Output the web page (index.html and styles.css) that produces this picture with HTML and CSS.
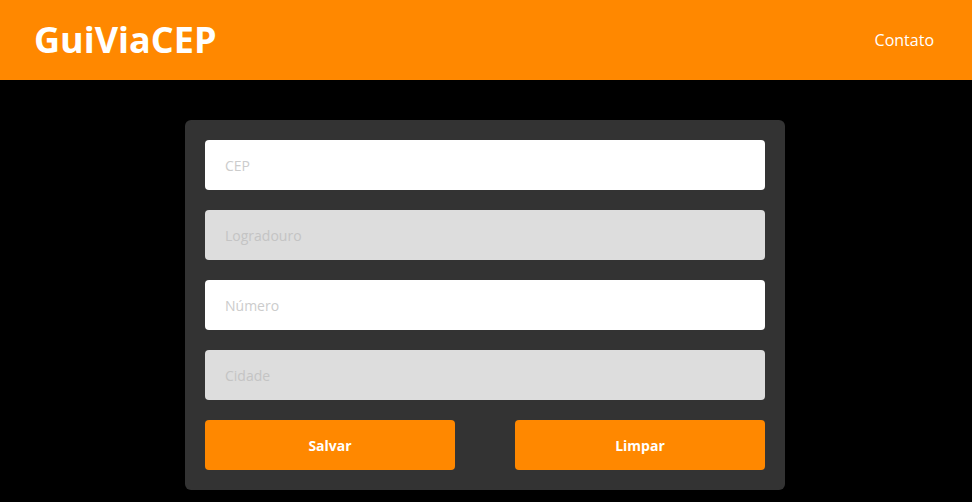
FILE: index.html
```html
<!DOCTYPE html>
<html lang="pt-BR">
<head>
<meta charset="utf-8">
<title>GuiViaCEP</title>
<link rel="stylesheet" href="styles.css">
</head>
<body>
<header class="topbar">
  <h1 class="brand">GuiViaCEP</h1>
  <a class="nav-link" href="#">Contato</a>
</header>
<main class="page">
  <form class="card">
    <input class="field" type="text" placeholder="CEP">
    <input class="field field-disabled" type="text" placeholder="Logradouro" disabled>
    <input class="field" type="text" placeholder="Número">
    <input class="field field-disabled" type="text" placeholder="Cidade" disabled>
    <div class="actions">
      <button class="btn" type="button">Salvar</button>
      <button class="btn" type="button">Limpar</button>
    </div>
  </form>
</main>
</body>
</html>
```
FILE: styles.css
```css
* { box-sizing: border-box; }
html, body {
  margin: 0;
  padding: 0;
  background: #000;
  font-family: "Open Sans", "Liberation Sans", sans-serif;
}
.topbar {
  height: 80px;
  background: #ff8800;
  display: flex;
  align-items: center;
  justify-content: space-between;
  padding: 0 38px 0 34px;
}
.brand {
  margin: 0;
  color: #fff;
  font-size: 36px;
  font-weight: 700;
  line-height: 1;
}
.nav-link {
  color: #fff;
  text-decoration: none;
  font-size: 16px;
}
.page {
  display: flex;
  justify-content: center;
  padding: 40px 2px 0 0;
}
.card {
  width: 600px;
  background: #333;
  border-radius: 6px;
  padding: 20px;
  display: flex;
  flex-direction: column;
  gap: 20px;
}
.field {
  height: 50px;
  width: 100%;
  border: none;
  border-radius: 4px;
  background: #fff;
  padding: 0 20px;
  font-family: inherit;
  font-size: 14px;
  color: #333;
  outline: none;
}
.field::placeholder { color: #cccccc; }
.field-disabled { background: #dddddd; }
.field-disabled::placeholder { color: #c4c4c4; }
.actions {
  display: grid;
  grid-template-columns: 250px 250px;
  justify-content: space-between;
}
.btn {
  height: 50px;
  border: none;
  border-radius: 4px;
  background: #ff8800;
  color: #fff;
  font-family: inherit;
  font-size: 14px;
  font-weight: 700;
  cursor: pointer;
}
```
